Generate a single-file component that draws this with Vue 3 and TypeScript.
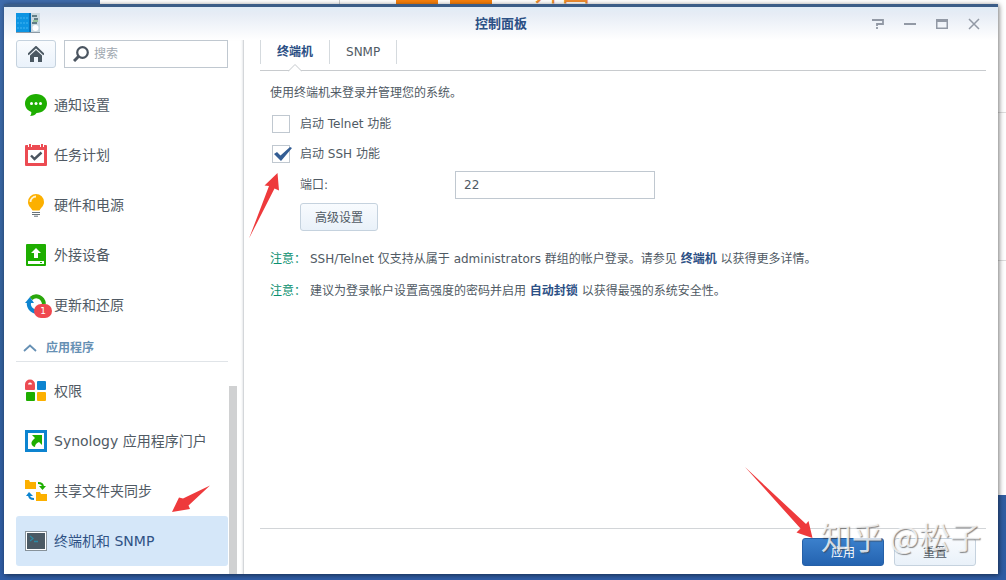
<script setup lang="ts">
import { ref } from 'vue'

interface NavItem {
  id: string
  label: string
  badge?: number
}

const systemItems: NavItem[] = [
  { id: 'notify', label: '通知设置' },
  { id: 'tasks', label: '任务计划' },
  { id: 'power', label: '硬件和电源' },
  { id: 'devices', label: '外接设备' },
  { id: 'update', label: '更新和还原', badge: 1 },
]
const appItems: NavItem[] = [
  { id: 'privileges', label: '权限' },
  { id: 'portal', label: 'Synology 应用程序门户' },
  { id: 'sync', label: '共享文件夹同步' },
  { id: 'terminal', label: '终端机和 SNMP' },
]
const groups = [
  { id: 'system', title: '', items: systemItems },
  { id: 'apps', title: '应用程序', items: appItems },
]
const tabs = ['终端机', 'SNMP']

const selected = ref('terminal')
const activeTab = ref('终端机')
const query = ref('')
const telnet = ref(false)
const ssh = ref(true)
const port = ref('22')
</script>

<template>
  <div class="desktop">
    <div class="backdrop">
      <span class="rule"></span>
      <span class="block first"></span>
      <span class="block second"></span>
      <span class="behind">开回</span>
      <span class="line upper"></span>
      <span class="line lower"></span>
    </div>

    <section class="window">
      <header class="titlebar">
        <svg class="app-icon" width="24" height="22" viewBox="0 0 24 22">
          <rect x="0" y="19" width="24" height="1" fill="#8d9aa5" />
          <rect width="15" height="19" fill="#0d94e2" />
          <path d="M1 5h12M1 10h12M1 15h12" stroke="#45b5f0" stroke-dasharray="2 1" />
          <path d="M14 0v19" stroke="#0870b8" stroke-width="2" />
          <rect x="15" width="9" height="19" fill="#c9d8e0" />
          <path d="M16 3h5M18 6h4M16 10h5" stroke="#41606a" stroke-width="1.500" />
          <path d="M17 8h5" stroke="#67ad58" />
          <circle cx="19.500" cy="15" r="3" fill="#fff" />
        </svg>
        <h1>控制面板</h1>
        <div class="controls">
          <button type="button" aria-label="帮助">
            <svg width="12" height="12" viewBox="0 0 12 12"><path d="M0 2h11v4H5v2M5 9v2" stroke-width="1.800" /></svg>
          </button>
          <button type="button" aria-label="最小化">
            <svg width="12" height="12" viewBox="0 0 12 12"><path d="M0 6h12" /></svg>
          </button>
          <button type="button" aria-label="最大化">
            <svg width="12" height="12" viewBox="0 0 12 12"><path d="M0 2.500h12" stroke-width="3" /><path d="M.75 2v8.250h10.500V2" stroke-width="1.500" /></svg>
          </button>
          <button type="button" aria-label="关闭">
            <svg width="12" height="12" viewBox="0 0 12 12"><path d="M1 1l10 10M11 1L1 11" /></svg>
          </button>
        </div>
      </header>

      <div class="body">
        <aside class="sidebar">
          <div class="tools">
            <button type="button" class="home" aria-label="主页">
              <svg width="16" height="16" viewBox="0 0 16 16">
                <path d="M0 8.500L8 1l8 7.500" fill="none" stroke="#4b5862" stroke-width="2" />
                <path d="M8 4l6 5.500V16h-4v-5H6v5H2V9.500z" fill="#4b5862" />
              </svg>
            </button>
            <label class="search">
              <svg width="16" height="16" viewBox="0 0 16 16">
                <circle cx="9.500" cy="6.500" r="5.300" fill="none" stroke="#4b5560" stroke-width="2.200" />
                <path d="M6 10l-5 5" stroke="#4b5560" stroke-width="3" />
              </svg>
              <input v-model="query" type="text" placeholder="搜索" aria-label="搜索" />
            </label>
          </div>

          <div class="scroller">
            <nav>
              <template v-for="group in groups" :key="group.id">
                <button v-if="group.title" type="button" class="group">
                  <svg width="14" height="8" viewBox="0 0 14 8"><path d="M1 7l6-5.500L13 7" fill="none" stroke="#6690b4" stroke-width="1.800" /></svg>
                  {{ group.title }}
                </button>
                <button
                  v-for="item in group.items"
                  :key="item.id"
                  type="button"
                  class="item"
                  :class="{ selected: item.id === selected }"
                  @click="selected = item.id"
                >
                  <span class="icon">
                    <svg width="24" height="24" viewBox="0 0 24 24">
                      <g v-if="item.id === 'notify'">
                        <path d="M12 1c6.200 0 11 4 11 9.500S18.500 20 12.500 20c-1 2-3.500 3-6.500 3 1-1 1.500-2.500 1.300-4C3.500 17.500 1 14.500 1 10.500 1 5 5.800 1 12 1z" fill="#1eae00" />
                        <g fill="#fff"><circle cx="7.500" cy="10.500" r="1.500" /><circle cx="12" cy="10.500" r="1.500" /><circle cx="16.500" cy="10.500" r="1.500" /></g>
                      </g>
                      <g v-else-if="item.id === 'tasks'">
                        <rect x="1" y="2" width="22" height="21" rx="1" fill="#ec4b52" />
                        <rect x="4" y="7" width="16" height="13" fill="#fff" />
                        <path d="M6 0v4M18 0v4" stroke="#fff" stroke-width="4" />
                        <path d="M6 1v3M18 1v3" stroke="#ec4b52" stroke-width="2" />
                        <path d="M7 12.500l3.500 3.500 7-6.500" fill="none" stroke="#4b555f" stroke-width="2.400" />
                      </g>
                      <g v-else-if="item.id === 'power'">
                        <path d="M12 1a8 8 0 0 1 8 8c0 4-3 5.500-4.500 8.500h-7C7 14.500 4 13 4 9a8 8 0 0 1 8-8z" fill="#fcb000" />
                        <path d="M6.500 9A5.500 5.500 0 0 1 12 3.500" fill="none" stroke="#fff2cf" stroke-width="1.800" />
                        <path d="M8 19.500h8M8 21.500h8M10 23.200h4" stroke="#68737a" />
                      </g>
                      <g v-else-if="item.id === 'devices'">
                        <rect x="2" y="1" width="20" height="22" rx="1" fill="#1eae00" />
                        <path d="M12 5l5 5h-3v5h-4v-5H7z" fill="#fff" />
                        <path d="M4 19.500h16" stroke="#fff" stroke-width="3" />
                        <path d="M16 19.500h2" stroke="#1eae00" />
                      </g>
                      <g v-else-if="item.id === 'update'">
                        <path d="M7 5.500C12 1 19 4 20 11" fill="none" stroke="#2aa70b" stroke-width="4" />
                        <path d="M5 9c-1 5 2 9 8 10" fill="none" stroke="#0d84d0" stroke-width="4" />
                        <path d="M1 10L6 4l4 6z" fill="#0d84d0" />
                      </g>
                      <g v-else-if="item.id === 'privileges'">
                        <path d="M1 5.500a5 5 0 0 1 10 0V10a1 1 0 0 1-1 1H2a1 1 0 0 1-1-1z" fill="#ec4b52" />
                        <path d="M4 5.500a2 2 0 0 1 4 0z" fill="#fff" />
                        <rect x="13" y="2" width="9" height="9" rx="1" fill="#0d84d0" />
                        <rect x="2" y="13" width="9" height="9" rx="1" fill="#1eae00" />
                        <rect x="13" y="13" width="9" height="9" rx="1" fill="#fcb000" />
                      </g>
                      <g v-else-if="item.id === 'portal'">
                        <rect x="2.500" y="2.500" width="19" height="19" fill="#fff" stroke="#0d84d0" stroke-width="3" />
                        <path d="M8 6h10v10l-3-3c-3 1-4 3-4 5-4-1-5-5-1-8l1-1z" fill="#1eae00" />
                      </g>
                      <g v-else-if="item.id === 'sync'">
                        <path d="M1 1h4l1 2h6v7H1zM12 13h4l1 2h6v7H12z" fill="#fcb000" />
                        <path d="M14 4c3 0 5 1 5 4" fill="none" stroke="#1eae00" stroke-width="2" />
                        <path d="M15 7h7l-3.500 4z" fill="#1eae00" />
                        <path d="M10 20c-3 0-5-1-5-4" fill="none" stroke="#0d84d0" stroke-width="2" />
                        <path d="M2 17h7l-4-4z" fill="#0d84d0" />
                      </g>
                      <g v-else>
                        <rect x="1" y="2" width="22" height="20" fill="#87929a" />
                        <rect x="2.500" y="3.500" width="19" height="17" fill="#4b5a65" stroke="#fff" />
                        <path d="M6 7l3 2.500L6 12M10 12.500h4" fill="none" stroke="#2c8aa5" stroke-width="1.300" />
                      </g>
                    </svg>
                    <span v-if="item.badge" class="badge">{{ item.badge }}</span>
                  </span>
                  {{ item.label }}
                </button>
              </template>
            </nav>
            <div class="track"><div class="thumb"></div></div>
          </div>
        </aside>

        <main>
          <div class="tabs" role="tablist">
            <button
              v-for="tab in tabs"
              :key="tab"
              type="button"
              role="tab"
              :aria-selected="tab === activeTab"
              :class="{ active: tab === activeTab }"
              @click="activeTab = tab"
            >
              {{ tab }}
              <svg v-if="tab === activeTab" class="pointer" width="14" height="8" viewBox="0 0 14 8">
                <path d="M0 7.500L7 .5l7 7" fill="#fff" stroke="#c4c8cc" />
              </svg>
            </button>
          </div>

          <form class="content" @submit.prevent>
            <p class="intro">使用终端机来登录并管理您的系统。</p>
            <label class="check">
              <span class="box">
                <input v-model="telnet" type="checkbox" />
                <svg v-if="telnet" width="20" height="18" viewBox="0 0 20 18"><path d="M2 9l3-2 3.500 3.500L18 2l2 1L9 16z" /></svg>
              </span>
              启动 Telnet 功能
            </label>
            <label class="check">
              <span class="box">
                <input v-model="ssh" type="checkbox" />
                <svg v-if="ssh" width="20" height="18" viewBox="0 0 20 18"><path d="M2 9l3-2 3.500 3.500L18 2l2 1L9 16z" /></svg>
              </span>
              启动 SSH 功能
            </label>
            <div class="field">
              <label for="port">端口:</label>
              <input id="port" v-model="port" type="text" />
            </div>
            <button type="button" class="btn advanced">高级设置</button>
            <p class="note"><span class="tag">注意：</span><span>SSH/Telnet 仅支持从属于 administrators 群组的帐户登录。请参见 <a href="#terminal">终端机</a> 以获得更多详情。</span></p>
            <p class="note"><span class="tag">注意：</span><span>建议为登录帐户设置高强度的密码并启用 <a href="#block">自动封锁</a> 以获得最强的系统安全性。</span></p>
          </form>

          <footer>
            <button type="button" class="btn primary">应用</button>
            <button type="button" class="btn">重置</button>
          </footer>
        </main>
      </div>
    </section>

    <svg class="arrow to-check" width="32" height="68" viewBox="0 0 32 68"><path d="M29.500 1L16.500 13.500l4.500.5L1 66.500 26.500 16.500l4.500 2z" /></svg>
    <svg class="arrow to-item" width="40" height="28" viewBox="0 0 40 28"><path d="M1 27L8 12.500l4 1L39 .5 17.500 20.500 19 24z" /></svg>
    <svg class="arrow to-apply" width="68" height="72" viewBox="0 0 68 72"><path d="M0 0l55.500 61.500-4 4L67.500 71l-4-17-2.500 3z" /></svg>
    <div class="watermark">知乎 @松子</div>
  </div>
</template>

<style>
body {
  margin: 0;
}
</style>

<style scoped>
* {
  box-sizing: border-box;
}
.desktop {
  position: relative;
  display: flex;
  min-height: 100vh;
  padding: 4px 8px 6px 4px;
  overflow: hidden;
  background: linear-gradient(180deg, #3f6cac, #34629c 55%, #2f5ca4);
  font-family: "DejaVu Sans", "Noto Sans CJK SC", sans-serif;
  font-size: 12px;
  line-height: 18px;
  color: #505a64;
}
button,
input {
  font: inherit;
  color: inherit;
}
button {
  padding: 0;
  border: 0;
  background: none;
}
.backdrop {
  position: absolute;
  top: 0;
  right: 0;
  bottom: 85px;
  left: 100px;
  overflow: hidden;
  background: #fff;
}
.backdrop span {
  position: absolute;
  top: 0;
}
.rule {
  left: 239px;
  width: 1px;
  height: 4px;
  background: #ccc;
}
.block {
  width: 42px;
  height: 4px;
  background: #f77f0c;
}
.first {
  left: 296px;
}
.second {
  left: 350px;
}
.backdrop .behind {
  top: -22px;
  left: 434px;
  font-size: 28px;
  line-height: 28px;
  color: #f08c30;
}
.backdrop .line {
  right: 0;
  width: 8px;
  height: 1px;
  background: #ddd;
}
.backdrop .upper {
  top: 112px;
}
.backdrop .lower {
  top: 260px;
}
.window {
  position: relative;
  display: flex;
  flex: 1;
  flex-direction: column;
  min-width: 0;
  border-top: 3px solid #3b5d88;
  background: #fff;
  box-shadow: 1px 1px 5px rgba(0, 0, 0, 0.55);
}
.titlebar {
  display: flex;
  align-items: center;
  height: 33px;
  padding: 0 18px 0 12px;
  background: linear-gradient(#e1ecf6, #e6ecf5 20%, #fff);
}
.app-icon {
  margin-right: 68px;
}
h1 {
  flex: 1;
  margin: 0;
  padding-left: 22px;
  font-size: 13px;
  line-height: 18px;
  text-align: center;
  color: #2c5085;
}
.controls {
  display: flex;
  gap: 20px;
}
.controls svg {
  display: block;
  fill: none;
  stroke: #9299a5;
  stroke-width: 2;
}
.controls button:last-child svg {
  stroke-width: 1.5;
}
.body {
  display: flex;
  flex: 1;
  min-height: 0;
}
.sidebar {
  display: flex;
  flex: none;
  flex-direction: column;
  width: 240px;
  padding-left: 12px;
  border-right: 1px solid #d4d7da;
  box-shadow: inset -2px 0 2px -1px #e8eaec;
}
.tools {
  display: flex;
  gap: 8px;
  height: 40px;
  padding-right: 15px;
}
.home {
  display: flex;
  align-items: center;
  justify-content: center;
  width: 40px;
  height: 28px;
  border: 1px solid #c5d2de;
  border-radius: 3px;
  background: linear-gradient(#fafcfe, #eaf2fb);
}
.search {
  display: flex;
  flex: 1;
  align-items: center;
  gap: 5px;
  min-width: 0;
  height: 28px;
  padding-left: 8px;
  border: 1px solid #c0c8d0;
}
.search input {
  flex: 1;
  min-width: 0;
  padding: 0;
  border: 0;
  background: none;
  outline: none;
}
.search input::placeholder {
  color: #a0a8b0;
}
.scroller {
  display: flex;
  flex: 1;
  min-height: 0;
}
nav {
  flex: 1;
}
.item {
  display: flex;
  align-items: center;
  gap: 6px;
  width: 100%;
  height: 50px;
  padding-left: 8px;
  border-radius: 3px;
  font-size: 14px;
  line-height: 20px;
  white-space: nowrap;
}
.item.selected {
  background: #d5e7f9;
  color: #2f5285;
}
.icon {
  position: relative;
  width: 24px;
  height: 24px;
}
.icon svg {
  display: block;
}
.badge {
  position: absolute;
  top: 11px;
  left: 10px;
  width: 18px;
  height: 14px;
  border-radius: 7px;
  background: #f0484f;
  font-size: 9px;
  line-height: 14px;
  text-align: center;
  color: #fff;
}
.group {
  display: flex;
  align-items: center;
  gap: 9px;
  width: 100%;
  height: 32px;
  margin-bottom: 4px;
  padding: 4px 0 0 7px;
  border-bottom: 1px solid #e0e4e8;
  font-weight: bold;
  color: #6690b4;
}
.track {
  display: flex;
  flex: none;
  flex-direction: column;
  justify-content: flex-end;
  width: 15px;
  padding: 0 6px 0 1px;
}
.thumb {
  height: 38%;
  background: #d0d1d2;
}
main {
  display: flex;
  flex: 1;
  flex-direction: column;
  min-width: 0;
  padding: 0 12px 0 16px;
}
.tabs {
  display: flex;
  height: 31px;
  border-bottom: 1px solid #c8cbce;
}
.tabs button {
  position: relative;
  height: 24px;
  padding: 0 16px;
  border-right: 1px solid #d5dade;
}
.tabs button:first-child {
  border-left: 1px solid #d5dade;
}
.tabs .active {
  font-weight: bold;
  color: #2c5085;
}
.pointer {
  position: absolute;
  top: 24px;
  left: calc(50% - 7px);
}
.content {
  display: flex;
  flex: 1;
  flex-direction: column;
  align-items: flex-start;
  padding: 13px 10px;
}
.content p {
  margin: 0;
}
.content .intro {
  margin-bottom: 7px;
}
.check {
  display: flex;
  align-items: center;
  gap: 10px;
  height: 30px;
  padding-left: 2px;
}
.box {
  position: relative;
  width: 18px;
  height: 18px;
}
.box input {
  display: block;
  width: 18px;
  height: 18px;
  margin: 0;
  border: 1px solid #c0c8d0;
  background: #fff;
  appearance: none;
}
.box svg {
  position: absolute;
  top: 0;
  left: 0;
  fill: #335d94;
  pointer-events: none;
}
.field {
  display: flex;
  align-items: center;
  height: 28px;
  margin: 2px 0 4px;
  padding-left: 30px;
}
.field label {
  width: 155px;
}
.field input {
  width: 200px;
  height: 28px;
  padding: 0 8px;
  border: 1px solid #c0c8d0;
  background: #fff;
}
.btn {
  width: 82px;
  height: 28px;
  padding-top: 1px;
  border: 1px solid #c5d2de;
  border-radius: 3px;
  background: linear-gradient(#f8fbfe, #e9f1f9);
}
.btn.advanced {
  width: 78px;
  margin: 0 0 19px 30px;
}
.note {
  display: flex;
  height: 32px;
}
.tag {
  flex: none;
  width: 40px;
  color: #0b9070;
}
a {
  font-weight: bold;
  color: #2c5085;
  text-decoration: none;
}
footer {
  display: flex;
  justify-content: flex-end;
  gap: 10px;
  height: 46px;
  padding: 9px 10px 0 0;
  border-top: 1px solid #d2d5d8;
}
.btn.primary {
  border-color: #2560a8;
  background: linear-gradient(#3b80cc, #2463b0);
  color: #fff;
}
.arrow {
  position: absolute;
  fill: #ee3a3c;
  pointer-events: none;
}
.to-check {
  top: 172px;
  left: 248px;
}
.to-item {
  top: 485px;
  left: 171px;
}
.to-apply {
  right: 193px;
  bottom: 41px;
}
.watermark {
  position: absolute;
  right: 25px;
  bottom: 26px;
  font-family: "Noto Sans CJK SC", sans-serif;
  font-size: 31px;
  line-height: 36px;
  color: rgba(255, 255, 255, 0.8);
  text-shadow: 1px 1px 1px rgba(60, 60, 60, 0.6);
  pointer-events: none;
}
</style>
